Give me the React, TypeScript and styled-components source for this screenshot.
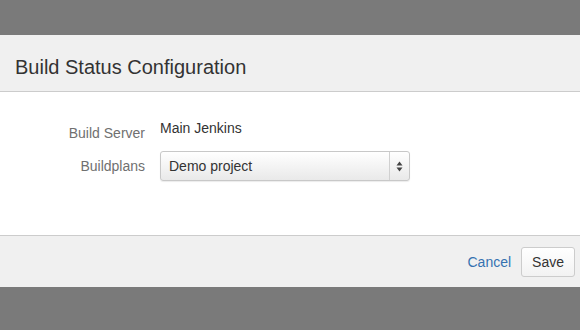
import React from "react";
import styled, { createGlobalStyle } from "styled-components";

const GlobalStyle = createGlobalStyle`
  html, body {
    margin: 0;
    padding: 0;
    background: #7a7a7a;
    font-family: "Liberation Sans", Arial, sans-serif;
  }
`;

const Page = styled.div`
  width: 580px;
  height: 330px;
  background: #7a7a7a;
  padding-top: 35px;
  box-sizing: border-box;
  overflow: hidden;
`;

const Dialog = styled.section`
  background: #fff;
  display: flex;
  flex-direction: column;
`;

const Header = styled.header`
  height: 57px;
  background: #f0f0f0;
  border-bottom: 1px solid #cccccc;
  display: flex;
  align-items: center;
  padding: 0 15px;
  box-sizing: border-box;
`;

const Title = styled.h2`
  margin: 0;
  font-size: 20px;
  font-weight: normal;
  color: #333;
  padding-top: 9px;
`;

const Body = styled.div`
  height: 143px;
  padding: 25px 0 0;
  box-sizing: border-box;
  display: flex;
  flex-direction: column;
  gap: 10px;
`;

const Row = styled.div`
  display: grid;
  grid-template-columns: 145px 1fr;
  column-gap: 15px;
  align-items: center;
  min-height: 24px;
`;

const Label = styled.label<{ $offset?: number }>`
  text-align: right;
  font-size: 14px;
  color: #707070;
  padding-top: ${(p) => p.$offset ?? 0}px;
`;

const Value = styled.span`
  font-size: 14px;
  color: #333;
  padding-bottom: 2px;
`;

const SelectBox = styled.div`
  width: 250px;
  height: 30px;
  box-sizing: border-box;
  border: 1px solid #c8c8c8;
  border-radius: 3px;
  background: linear-gradient(#ffffff, #e9e9e9);
  box-shadow: 0 1px 1px rgba(0, 0, 0, 0.08);
  display: flex;
  align-items: center;
`;

const SelectText = styled.span`
  flex: 1;
  padding-left: 8px;
  font-size: 14px;
  color: #333;
`;

const Arrows = styled.span`
  width: 19px;
  height: 100%;
  border-left: 1px solid #d0d0d0;
  display: flex;
  align-items: center;
  justify-content: center;
`;

const Footer = styled.footer`
  height: 52px;
  background: #f0f0f0;
  border-top: 1px solid #cccccc;
  box-sizing: border-box;
  display: flex;
  align-items: center;
  justify-content: flex-end;
  padding: 0 5px 0 0;
  gap: 10px;
`;

const LinkButton = styled.a`
  font-size: 14px;
  color: #3572b0;
  text-decoration: none;
  cursor: pointer;
`;

const Button = styled.button`
  height: 30px;
  padding: 0 10px;
  font-family: inherit;
  font-size: 14px;
  color: #333;
  border: 1px solid #cccccc;
  border-radius: 3px;
  background: linear-gradient(#ffffff, #f2f2f2);
  cursor: pointer;
`;

const App: React.FC = () => (
  <Page>
    <GlobalStyle />
    <Dialog>
      <Header>
        <Title>Build Status Configuration</Title>
      </Header>
      <Body>
        <Row>
          <Label $offset={8}>Build Server</Label>
          <Value>Main Jenkins</Value>
        </Row>
        <Row>
          <Label>Buildplans</Label>
          <SelectBox>
            <SelectText>Demo project</SelectText>
            <Arrows>
              <svg width="7" height="11" viewBox="0 0 7 11">
                <path d="M3.5 0.5 L6.5 4.5 L0.5 4.5 Z" fill="#444" />
                <path d="M3.5 10.5 L6.5 6.5 L0.5 6.5 Z" fill="#444" />
              </svg>
            </Arrows>
          </SelectBox>
        </Row>
      </Body>
      <Footer>
        <LinkButton>Cancel</LinkButton>
        <Button>Save</Button>
      </Footer>
    </Dialog>
  </Page>
);

export default App;
